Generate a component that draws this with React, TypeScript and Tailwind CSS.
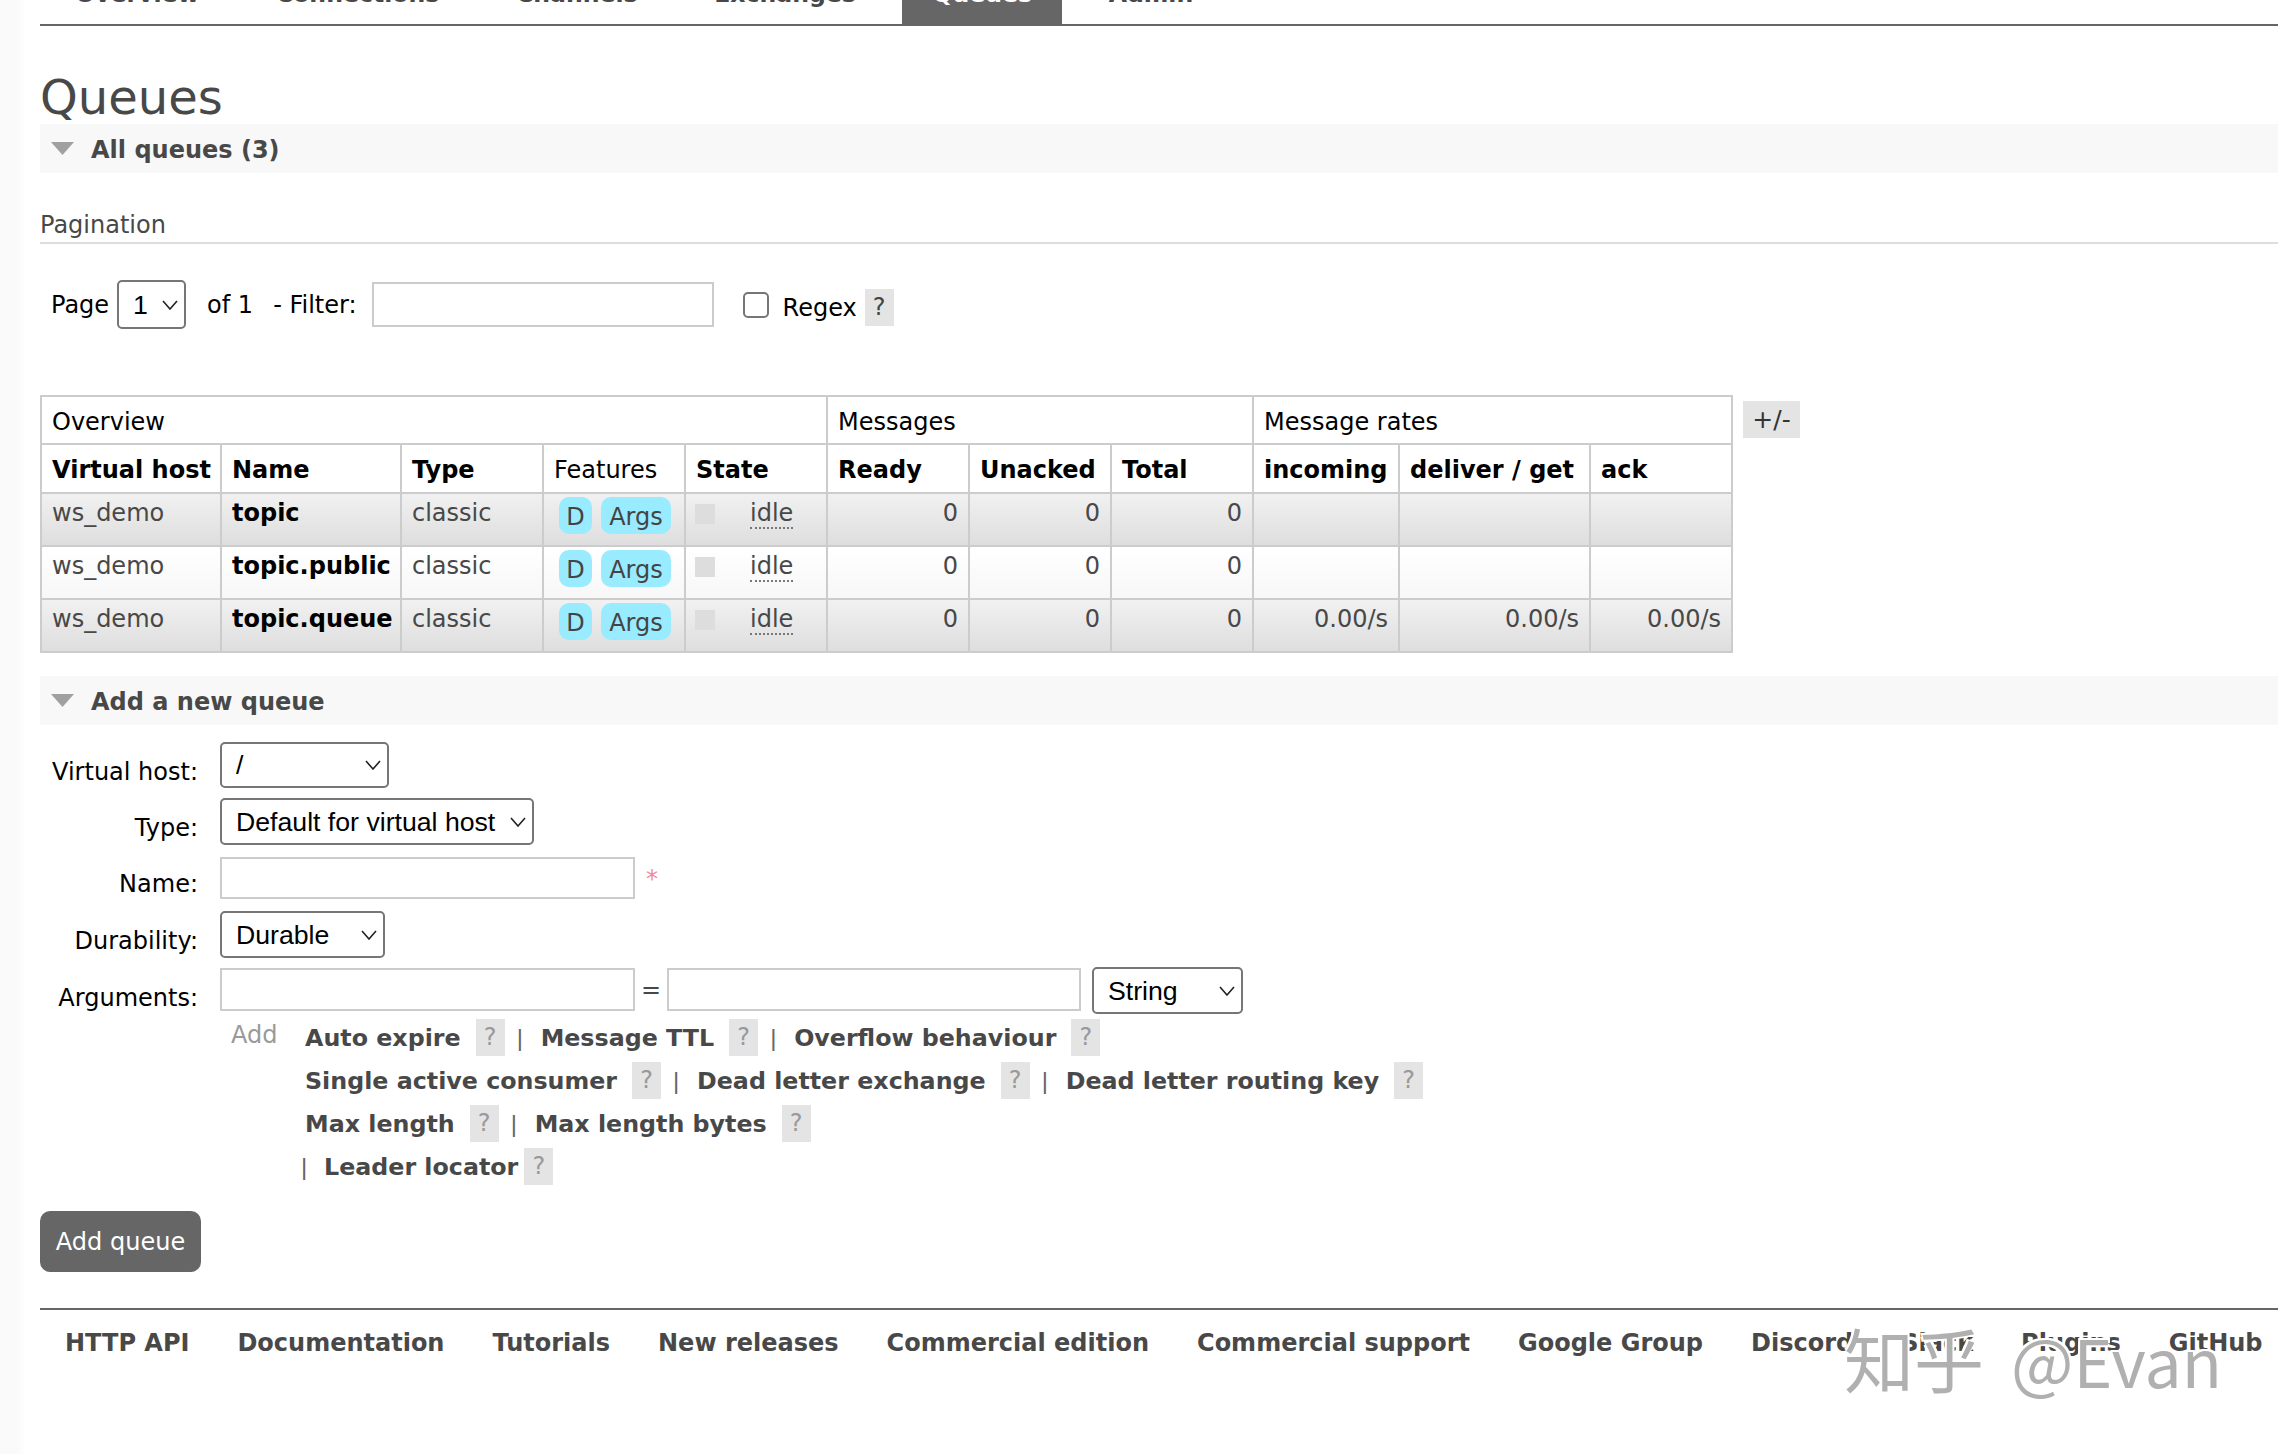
import type { ReactNode } from 'react'

const tabs = ['Overview', 'Connections', 'Channels', 'Exchanges', 'Queues', 'Admin']
const footerLinks = ['HTTP API', 'Documentation', 'Tutorials', 'New releases', 'Commercial edition', 'Commercial support', 'Google Group', 'Discord', 'Slack', 'Plugins', 'GitHub']
const colWidths = ['w-[180px]', 'w-[180px]', 'w-[142px]', 'w-[142px]', 'w-[142px]', 'w-[142px]', 'w-[142px]', 'w-[142px]', 'w-[146px]', 'w-[191px]', 'w-[142px]']
const queues = [
  { name: 'topic', rates: ['', '', ''], odd: true },
  { name: 'topic.public', rates: ['', '', ''], odd: false },
  { name: 'topic.queue', rates: ['0.00/s', '0.00/s', '0.00/s'], odd: true },
]

function Triangle() {
  return (
    <svg width="23" height="13" viewBox="0 0 23 13" className="ml-[11px] mr-[17px] shrink-0">
      <path d="M0 0h23L11.5 13z" fill="#a0a0a0" />
    </svg>
  )
}

function SectionBar({ title }: { title: string }) {
  return (
    <div className="flex h-[49px] items-center bg-[#f8f8f8] font-bold text-[#484848]">
      <Triangle />
      <span className="pt-[2px]">{title}</span>
    </div>
  )
}

function Help({ muted }: { muted?: boolean }) {
  return <span className={`flex h-[37px] w-[29px] shrink-0 items-center justify-center bg-[#e4e4e4] text-[24px] ${muted ? 'text-[#999]' : 'text-[#444]'}`}>?</span>
}

function Select({ value, width, height }: { value: string; width: string; height: string }) {
  return (
    <span className={`relative block shrink-0 ${width} ${height}`}>
      <select defaultValue={value} className="h-full w-full appearance-none rounded-[5px] border-2 border-[#767676] bg-white pl-[14px] font-['Liberation_Sans',sans-serif] text-[26.67px] text-black">
        <option>{value}</option>
      </select>
      <svg width="16" height="10" viewBox="0 0 16 10" className="pointer-events-none absolute right-[8px] top-1/2 -translate-y-1/2">
        <path d="M1 1l7 8 7-8" fill="none" stroke="#222" strokeWidth="1.6" />
      </svg>
    </span>
  )
}

function TextBox({ width, height }: { width: string; height: string }) {
  return <input type="text" className={`block shrink-0 border-2 border-[#ccc] bg-white ${width} ${height}`} />
}

function FormRow({ label, labelTop, children, className }: { label: string; labelTop: string; children: ReactNode; className: string }) {
  return (
    <div className={`flex items-start ${className}`}>
      <label className={`w-[158px] text-right leading-[28px] text-black ${labelTop}`}>{label}</label>
      <div className="ml-[22px] flex items-start">{children}</div>
    </div>
  )
}

function ArgLink({ label, gap }: { label: string; gap: string }) {
  return (
    <>
      <span className="pt-[2px] text-[23.75px] font-bold leading-[35px] text-[#484848]">{label}</span>
      <span className={gap}>
        <Help muted />
      </span>
    </>
  )
}

function Sep({ width = 'ml-[12px] w-[24px]' }: { width?: string }) {
  return <span className={`font-['Liberation_Sans',sans-serif] leading-[35px] text-[#666] ${width}`}>|</span>
}

function Th({ children, bold = true }: { children: ReactNode; bold?: boolean }) {
  return <th className={`whitespace-nowrap border-2 border-[#ccc] bg-white pl-[10px] pt-[2px] text-left text-black ${bold ? 'font-bold' : 'font-normal'}`}>{children}</th>
}

function Td({ odd, right, children }: { odd: boolean; right?: boolean; children?: ReactNode }) {
  return (
    <td className={`border-2 border-[#ccc] bg-linear-to-b px-[10px] pt-[5px] align-top leading-[28px] text-[#484848] ${right ? 'text-right' : 'text-left'} ${odd ? 'from-[#f1f1f1] to-[#dedede]' : 'from-white to-[#f7f7f7]'}`}>
      {children}
    </td>
  )
}

function Queues() {
  return (
    <table className="w-[1691px] table-fixed border-collapse">
      <colgroup>
        {colWidths.map((w, i) => (
          <col key={i} className={w} />
        ))}
      </colgroup>
      <thead>
        <tr className="h-[48px]">
          <th colSpan={5} className="border-2 border-[#ccc] px-[10px] pt-[3px] text-left font-normal text-black">Overview</th>
          <th colSpan={3} className="border-2 border-[#ccc] px-[10px] pt-[3px] text-left font-normal text-black">Messages</th>
          <th colSpan={3} className="border-2 border-[#ccc] px-[10px] pt-[3px] text-left font-normal text-black">Message rates</th>
        </tr>
        <tr className="h-[49px]">
          <Th>Virtual host</Th>
          <Th>Name</Th>
          <Th>Type</Th>
          <Th bold={false}>Features</Th>
          <Th>State</Th>
          <Th>Ready</Th>
          <Th>Unacked</Th>
          <Th>Total</Th>
          <Th>incoming</Th>
          <Th>deliver / get</Th>
          <Th>ack</Th>
        </tr>
      </thead>
      <tbody>
        {queues.map((q) => (
          <tr key={q.name} className="h-[53px]">
            <Td odd={q.odd}>ws_demo</Td>
            <Td odd={q.odd}>
              <span className="whitespace-nowrap font-bold text-black">{q.name}</span>
            </Td>
            <Td odd={q.odd}>classic</Td>
            <td className={`border-2 border-[#ccc] bg-linear-to-b pl-[15px] align-top ${q.odd ? 'from-[#f1f1f1] to-[#dedede]' : 'from-white to-[#f7f7f7]'}`}>
              <div className="mt-[3px] flex gap-[9px] text-[#444]">
                <span className="flex h-[37px] w-[33px] items-center justify-center rounded-[10px] bg-[#99ebff] pt-[2px]">D</span>
                <span className="flex h-[37px] w-[70px] items-center justify-center rounded-[10px] bg-[#99ebff] pt-[2px]">Args</span>
              </div>
            </td>
            <td className={`border-2 border-[#ccc] bg-linear-to-b pl-[9px] align-top ${q.odd ? 'from-[#f1f1f1] to-[#dedede]' : 'from-white to-[#f7f7f7]'}`}>
              <div className="mt-[5px] flex items-start text-[#484848]">
                <span className="mt-[5px] h-[20px] w-[20px] bg-[#ddd]" />
                <span className="ml-[35px] border-b-2 border-dotted border-[#777] leading-[28px]">idle</span>
              </div>
            </td>
            <Td odd={q.odd} right>0</Td>
            <Td odd={q.odd} right>0</Td>
            <Td odd={q.odd} right>0</Td>
            {q.rates.map((r, i) => (
              <Td key={i} odd={q.odd} right>{r}</Td>
            ))}
          </tr>
        ))}
      </tbody>
    </table>
  )
}

export default function App() {
  return (
    <div className="relative h-[1454px] overflow-hidden bg-[linear-gradient(to_right,#fafafa_0,#fafafa_16px,#fff_26px)] pl-[40px] font-['DejaVu_Sans',sans-serif] text-[24px]">
      <nav className="-mt-[30px] flex h-[56px] items-stretch border-b-2 border-[#666] pl-[5px] text-[23.6px] font-bold text-[#484848]">
        {tabs.map((t) => (
          <a key={t} className={`mr-[16.5px] flex items-start px-[30px] pt-[7px] ${t === 'Queues' ? 'bg-[#666] text-white' : ''}`}>
            {t}
          </a>
        ))}
      </nav>

      <h1 className="mt-[42px] h-[56px] pt-[1px] text-[48px] font-normal leading-[56px] text-[#484848]">Queues</h1>
      <SectionBar title="All queues (3)" />

      <h3 className="flex h-[71px] items-end border-b-2 border-[#ddd] pb-[2px] font-normal leading-[30px] text-[#484848]">Pagination</h3>

      <div className="ml-[11px] mt-[36px] flex h-[49px] items-center text-black">
        <span>Page</span>
        <Select value="1" width="w-[69px] ml-[8px]" height="h-[49px]" />
        <span className="ml-[21px]">of 1</span>
        <span className="ml-[20px]">- Filter:</span>
        <span className="ml-[15px]">
          <TextBox width="w-[342px]" height="h-[45px]" />
        </span>
        <span className="ml-[29px] h-[26px] w-[26px] rounded-[5px] border-2 border-[#767676] bg-white" />
        <span className="ml-[14px] pt-[7px]">Regex</span>
        <span className="ml-[8px] pt-[5px]">
          <Help />
        </span>
      </div>

      <div className="mt-[66px] flex items-start">
        <Queues />
        <span className="ml-[10px] mt-[6px] flex h-[37px] w-[57px] items-center justify-center bg-[#e4e4e4] text-[25px] text-[#333]">+/-</span>
      </div>

      <div className="mt-[23px]">
        <SectionBar title="Add a new queue" />
      </div>

      <FormRow label="Virtual host:" labelTop="pt-[16px]" className="mt-[17px] h-[46px]">
        <Select value="/" width="w-[169px]" height="h-[46px]" />
      </FormRow>
      <FormRow label="Type:" labelTop="pt-[16px]" className="mt-[10px] h-[47px]">
        <Select value="Default for virtual host" width="w-[314px]" height="h-[47px]" />
      </FormRow>
      <FormRow label="Name:" labelTop="pt-[13px]" className="mt-[12px] h-[42px]">
        <TextBox width="w-[415px]" height="h-[42px]" />
        <span className="ml-[11px] mt-[4px] text-[#f08a9a]">*</span>
      </FormRow>
      <FormRow label="Durability:" labelTop="pt-[16px]" className="mt-[12px] h-[47px]">
        <Select value="Durable" width="w-[165px]" height="h-[47px]" />
      </FormRow>
      <FormRow label="Arguments:" labelTop="pt-[17px]" className="mt-[9px] h-[47px]">
        <span className="mt-[1px]">
          <TextBox width="w-[415px]" height="h-[43px]" />
        </span>
        <span className="w-[32px] pt-[5px] text-center text-[#484848]">=</span>
        <span className="mt-[1px]">
          <TextBox width="w-[414px]" height="h-[43px]" />
        </span>
        <span className="ml-[11px]">
          <Select value="String" width="w-[151px]" height="h-[47px]" />
        </span>
      </FormRow>

      <div className="ml-[191px] mt-[5px] flex items-start leading-[37px]">
        <span className="w-[74px] pt-[1px] leading-[30px] text-[#999]">Add</span>
        <div className="flex flex-col gap-[6px]">
          <div className="flex h-[37px] items-center">
            <ArgLink label="Auto expire" gap="ml-[15px]" />
            <Sep />
            <ArgLink label="Message TTL" gap="ml-[15px]" />
            <Sep />
            <ArgLink label="Overflow behaviour" gap="ml-[15px]" />
          </div>
          <div className="flex h-[37px] items-center">
            <ArgLink label="Single active consumer" gap="ml-[15px]" />
            <Sep />
            <ArgLink label="Dead letter exchange" gap="ml-[15px]" />
            <Sep />
            <ArgLink label="Dead letter routing key" gap="ml-[15px]" />
          </div>
          <div className="flex h-[37px] items-center">
            <ArgLink label="Max length" gap="ml-[15px]" />
            <Sep />
            <ArgLink label="Max length bytes" gap="ml-[15px]" />
          </div>
          <div className="-ml-[4px] flex h-[37px] items-center">
            <Sep width="w-[23px]" />
            <ArgLink label="Leader locator" gap="ml-[6px]" />
          </div>
        </div>
      </div>

      <button className="mt-[26px] block h-[61px] w-[161px] rounded-[10px] bg-[#666] text-white">Add queue</button>

      <div className="mt-[36px] flex h-[60px] gap-[48px] border-t-2 border-[#666] pl-[25px] pt-[19px] font-bold leading-[28px] text-[#484848]">
        {footerLinks.map((l) => (
          <a key={l} className="shrink-0 whitespace-nowrap">{l}</a>
        ))}
      </div>

      <div className="absolute left-[1844px] top-[1314px] whitespace-nowrap font-['Noto_Sans_CJK_SC',sans-serif] text-[70px] font-normal leading-[88px] text-[#b0b0b0] [text-shadow:-2px_-2px_0_#fff,2px_-2px_0_#fff,-2px_2px_0_#fff]">
        知乎<span className="ml-[27px] text-[66px]">@Evan</span>
      </div>
    </div>
  )
}
